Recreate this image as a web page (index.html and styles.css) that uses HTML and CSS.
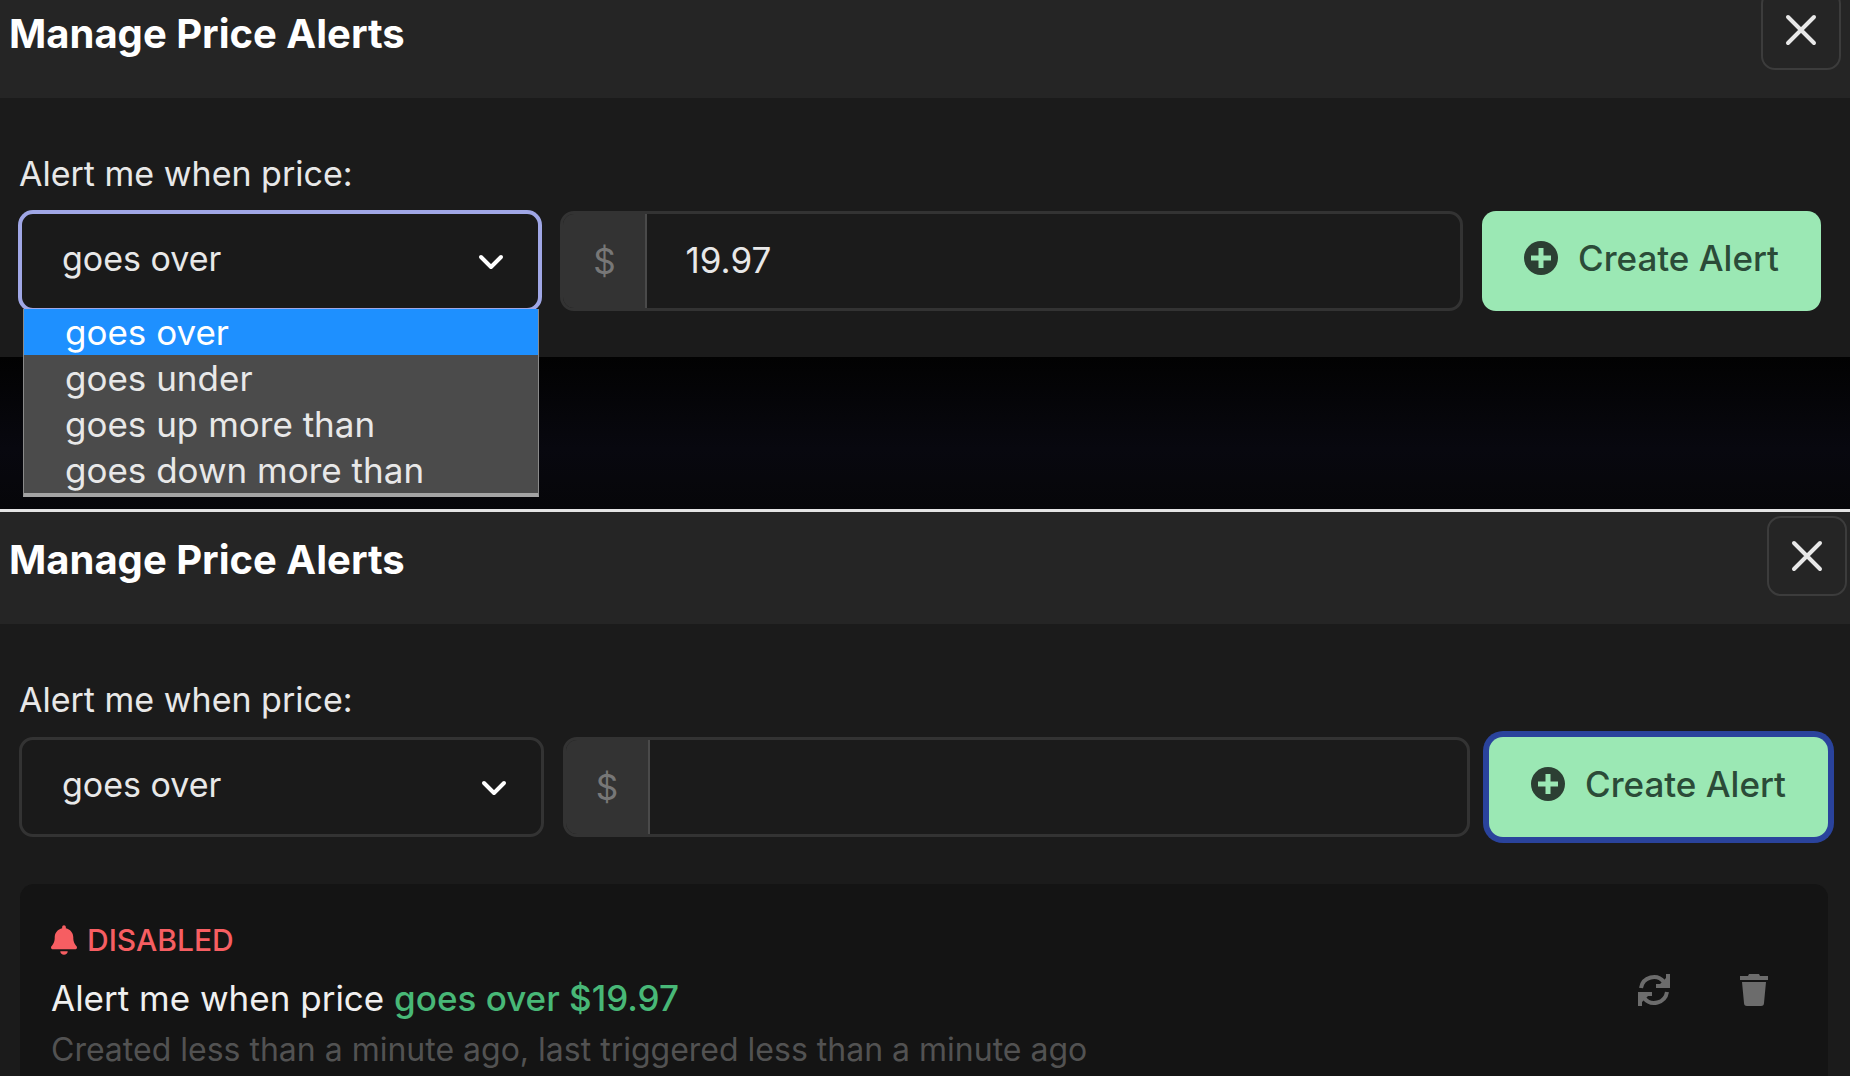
FILE: index.html
```html
<!DOCTYPE html>
<html lang="en">
<head>
  <meta charset="UTF-8">
  <meta name="viewport" content="width=device-width, initial-scale=1.0">
  <title>Manage Price Alerts</title>
  <link rel="stylesheet" href="styles.css">
</head>
<body>
  <!-- Creating an alert, condition list open -->
  <section class="panel panel-new">
    <header class="panel-header">
      <h2>Manage Price Alerts</h2>
      <button class="btn-close" type="button" aria-label="Close">
        <svg viewBox="0 0 32 32" width="32" height="32"><path d="M3 3L29 29M29 3L3 29"/></svg>
      </button>
    </header>
    <form class="panel-body">
      <label class="form-label" for="condition-new">Alert me when price:</label>
      <div class="form-row">
        <div class="select-wrap open">
          <select id="condition-new" class="select">
            <option selected>goes over</option>
            <option>goes under</option>
            <option>goes up more than</option>
            <option>goes down more than</option>
          </select>
          <svg class="chevron" viewBox="0 0 28 18" width="28" height="18"><path d="M4 4L14 14L24 4"/></svg>
          <ul class="options" role="listbox" aria-label="Condition">
            <li role="option" aria-selected="true" class="active">goes over</li>
            <li role="option" aria-selected="false">goes under</li>
            <li role="option" aria-selected="false">goes up more than</li>
            <li role="option" aria-selected="false">goes down more than</li>
          </ul>
        </div>
        <div class="input-group">
          <label class="addon" for="price-new">$</label>
          <input id="price-new" type="text" value="19.97">
        </div>
        <button class="btn-create" type="button">
          <svg viewBox="0 0 34 34" width="34" height="34"><circle cx="17" cy="17" r="17"/><path d="M17 7V27M7 17H27"/></svg>
          Create Alert
        </button>
      </div>
    </form>
  </section>

  <div class="backdrop"></div>

  <!-- Alert created -->
  <section class="panel panel-list">
    <header class="panel-header">
      <h2>Manage Price Alerts</h2>
      <button class="btn-close" type="button" aria-label="Close">
        <svg viewBox="0 0 32 32" width="32" height="32"><path d="M3 3L29 29M29 3L3 29"/></svg>
      </button>
    </header>
    <form class="panel-body">
      <label class="form-label" for="condition">Alert me when price:</label>
      <div class="form-row">
        <div class="select-wrap">
          <select id="condition" class="select">
            <option selected>goes over</option>
            <option>goes under</option>
            <option>goes up more than</option>
            <option>goes down more than</option>
          </select>
          <svg class="chevron" viewBox="0 0 28 18" width="28" height="18"><path d="M4 4L14 14L24 4"/></svg>
        </div>
        <div class="input-group">
          <label class="addon" for="price">$</label>
          <input id="price" type="text">
        </div>
        <button class="btn-create focused" type="button">
          <svg viewBox="0 0 34 34" width="34" height="34"><circle cx="17" cy="17" r="17"/><path d="M17 7V27M7 17H27"/></svg>
          Create Alert
        </button>
      </div>
    </form>
    <article class="alert-card">
      <div class="alert-info">
        <p class="alert-status">
          <svg viewBox="0 0 448 512" width="26" height="30"><path d="M224 0c-18 0-32 14-32 32v20C119 67 64 130 64 208v19c0 47-17 92-48 128l-8 8c-8 10-10 23-5 34s16 19 29 19h384c13 0 24-7 29-19s3-24-5-34l-8-8c-31-36-48-81-48-128v-19c0-78-55-141-128-156V32c0-18-14-32-32-32zm45 493c12-12 19-28 19-45H160c0 17 7 33 19 45s28 19 45 19 33-7 45-19z"/></svg>
          DISABLED
        </p>
        <p class="alert-rule">Alert me when price <strong>goes over $19.97</strong></p>
        <p class="alert-meta">Created less than a minute ago, last triggered less than a minute ago</p>
      </div>
      <div class="alert-actions">
        <button type="button" aria-label="Reset alert">
          <svg viewBox="0 0 32 32" width="32" height="32"><path class="line" d="M3 14A13 13 0 0 1 26 8M29 18A13 13 0 0 1 6 24"/><path d="M32 0V14H18V10H22L28 4V0zM0 32V18H14V22H10L4 28V32z"/></svg>
        </button>
        <button type="button" aria-label="Delete alert">
          <svg viewBox="0 0 28 32" width="28" height="32"><path d="M9 0H19L20 2H28V6H0V2H8zM2 8H26L24 29Q24 32 21 32H7Q4 32 4 29z"/></svg>
        </button>
      </div>
    </article>
  </section>
</body>
</html>
```
FILE: styles.css
```css
* {
  box-sizing: border-box;
}
body {
  display: flex;
  flex-direction: column;
  height: 100vh;
  margin: 0;
  overflow: hidden;
  background-color: #1b1b1b;
  color: #e8e8e8;
  font-family: Inter, "Liberation Sans", sans-serif;
  font-size: 35px;
  line-height: 40px;
}
h2, p, ul {
  margin: 0;
  padding: 0;
}
button, input, select {
  font: inherit;
  color: inherit;
}
button {
  cursor: pointer;
}

/* Panels */
.panel {
  background-color: #1b1b1b;
}
.panel-new {
  margin-top: -14px; /* header is partly scrolled away */
  padding-bottom: 46px;
}
.panel-list {
  display: flex;
  flex: 1;
  flex-direction: column;
  border-top: 3px solid #e4e4e4;
}
.panel-header {
  display: flex;
  align-items: center;
  justify-content: space-between;
  padding: 4px 9px 28px;
  background-color: #252525;
}
.panel-list .panel-header {
  padding-right: 3px;
}
.panel-header h2 {
  padding-top: 8px;
  color: #fff;
  font-size: 40px;
  font-weight: 700;
  line-height: 48px;
}
.btn-close {
  display: flex;
  align-items: center;
  justify-content: center;
  width: 80px;
  height: 80px;
  padding: 0;
  border: 2px solid #3c3c3c;
  border-radius: 14px;
  background: none;
}
.btn-close svg {
  fill: none;
  stroke: #e8e8e8;
  stroke-width: 4;
  stroke-linecap: round;
}
.panel-body {
  padding: 56px 29px 0 19px;
}
.panel-list .panel-body {
  padding-right: 22px;
}
.backdrop {
  height: 152px;
  background: linear-gradient(#020202, #08080f 60%, #060609);
}

/* Form */
.form-label {
  display: block;
  margin-bottom: 17px;
  font-size: 34px;
}
.form-row {
  display: grid;
  grid-template-columns: 11fr 19fr auto;
  gap: 19px;
}
.select-wrap {
  position: relative;
  min-width: 0;
}
.select {
  width: 100%;
  height: 100px;
  padding: 0 70px 4px 40px;
  border: 3px solid #333;
  border-radius: 14px;
  outline: none;
  background-color: #1a1a1a;
  font-size: 34px;
  appearance: none;
}
.open .select {
  border-color: #a0a7e6;
  box-shadow: 0 0 0 1px #a0a7e6;
}
.chevron {
  position: absolute;
  top: 42px;
  right: 36px;
  fill: none;
  stroke: #fff;
  stroke-width: 4;
  stroke-linecap: round;
  stroke-linejoin: round;
  pointer-events: none;
}
.options {
  position: absolute;
  top: 98px;
  right: 2px;
  left: 4px;
  z-index: 1;
  border: 1px solid #8a8a8a;
  border-top-width: 0;
  border-bottom: 4px solid #a4a4a4;
  background-color: #4b4b4b;
  line-height: 46px;
  list-style: none;
}
.options li {
  padding-left: 41px;
}
.options .active {
  background-color: #1e90ff;
  color: #fff;
}
.input-group {
  display: flex;
  min-width: 0;
  height: 100px;
  overflow: hidden;
  border: 3px solid #333;
  border-radius: 14px;
}
.addon {
  display: flex;
  align-items: center;
  justify-content: center;
  width: 84px;
  border-right: 2px solid #4a4a4a;
  background-color: #333;
  color: #777;
}
.input-group input {
  flex: 1;
  min-width: 0;
  padding: 0 38px 2px;
  border: 0;
  outline: none;
  background: none;
}
.btn-create {
  display: flex;
  align-items: center;
  gap: 20px;
  height: 100px;
  padding: 0 42px 6px 42px;
  border: 0;
  border-radius: 14px;
  background-color: #9be8b4;
  color: #2b4b38;
  font-weight: 500;
}
.btn-create.focused {
  box-shadow: 0 0 0 6px #2a439c;
}
.btn-create circle {
  fill: #2c3f33;
}
.btn-create path {
  stroke: #9be8b4;
  stroke-width: 5;
}

/* Alert list */
.alert-card {
  display: flex;
  flex: 1;
  justify-content: space-between;
  margin: 47px 22px 0 20px;
  padding: 36px 60px 0 31px;
  border-radius: 14px 14px 0 0;
  background-color: #141414;
}
.alert-status {
  display: flex;
  align-items: center;
  gap: 10px;
  color: #f65e62;
  font-size: 30px;
  font-weight: 500;
}
.alert-status svg {
  fill: #f65e62;
}
.alert-rule {
  margin: 18px 0 12px;
  color: #f0f0f0;
}
.alert-rule strong {
  color: #48b877;
  font-weight: 500;
}
.alert-meta {
  color: #525252;
  font-size: 32px;
}
.alert-actions {
  display: flex;
  align-items: flex-start;
  gap: 70px;
  padding-top: 54px;
}
.alert-actions button {
  display: flex;
  padding: 0;
  border: 0;
  background: none;
}
.alert-actions svg {
  fill: #6c6c6c;
}
.alert-actions .line {
  fill: none;
  stroke: #6c6c6c;
  stroke-width: 4;
}
```
